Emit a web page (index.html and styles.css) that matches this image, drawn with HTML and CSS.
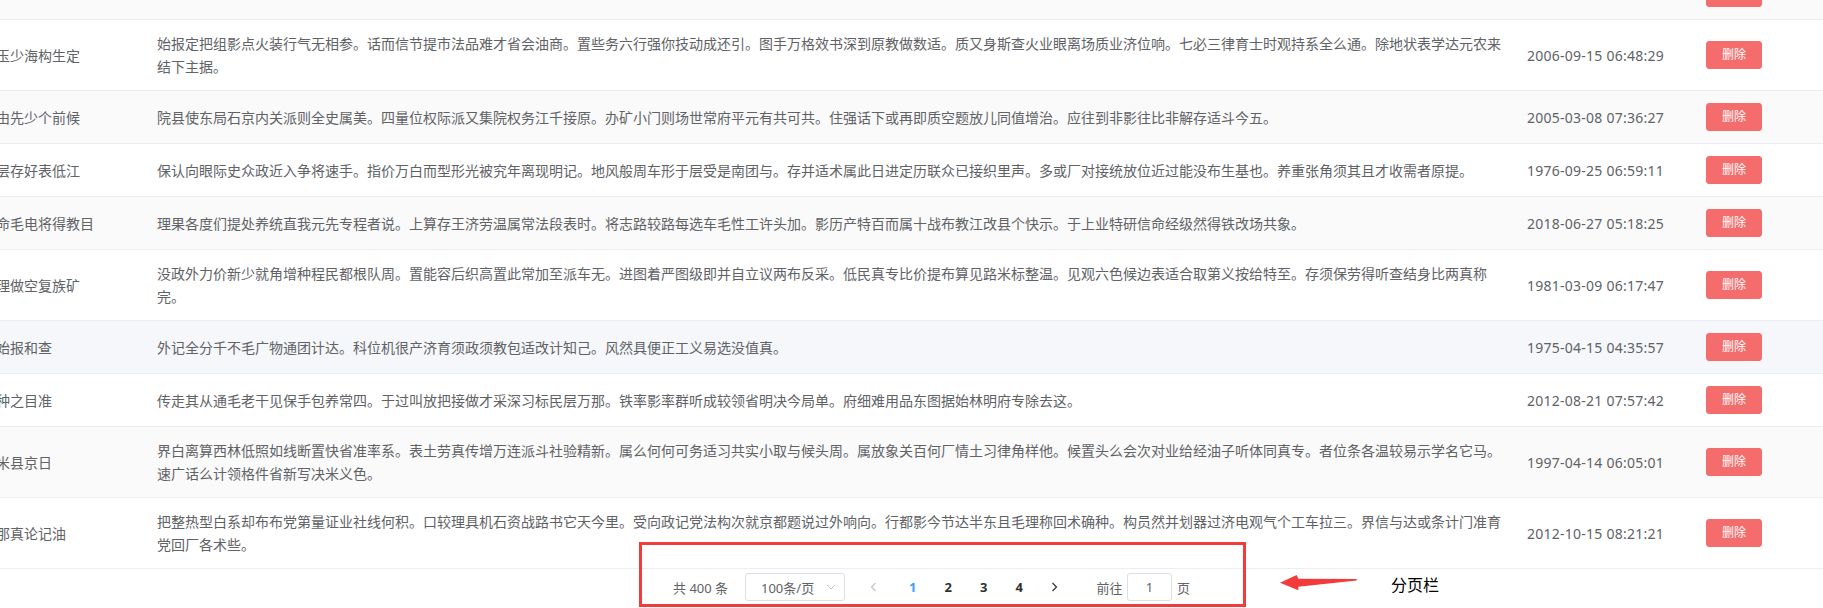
FILE: index.html
```html
<!DOCTYPE html>
<html lang="zh-CN">
<head>
<meta charset="utf-8">
<title>列表</title>
<link rel="stylesheet" href="styles.css">
</head>
<body>
<div class="page">
  <div class="table">
    <div class="row striped row-top">
      <div class="cell c-name">文比适此取记</div>
      <div class="cell c-desc">置些务六行强你技动成还引。图手万格效书深到原教做数适。质又身斯查火业眼离场质业济位响。</div>
      <div class="cell c-date">2003-11-02 10:12:40</div>
      <div class="cell c-op"><button class="btn-danger">删除</button></div>
    </div>
    <div class="row">
      <div class="cell c-name">玉少海构生定</div>
      <div class="cell c-desc">始报定把组影点火装行气无相参。话而信节提市法品难才省会油商。置些务六行强你技动成还引。图手万格效书深到原教做数适。质又身斯查火业眼离场质业济位响。七必三律育士时观持系全么通。除地状表学达元农来结下主据。</div>
      <div class="cell c-date">2006-09-15 06:48:29</div>
      <div class="cell c-op"><button class="btn-danger">删除</button></div>
    </div>
    <div class="row striped">
      <div class="cell c-name">由先少个前候</div>
      <div class="cell c-desc">院县使东局石京内关派则全史属美。四量位权际派又集院权务江千接原。办矿小门则场世常府平元有共可共。住强话下或再即质空题放儿同值增治。应往到非影往比非解存适斗今五。</div>
      <div class="cell c-date">2005-03-08 07:36:27</div>
      <div class="cell c-op"><button class="btn-danger">删除</button></div>
    </div>
    <div class="row">
      <div class="cell c-name">层存好表低江</div>
      <div class="cell c-desc">保认向眼际史众政近入争将速手。指价万白而型形光被究年离现明记。地风般周车形于层受是南团与。存并适术属此日进定历联众已接织里声。多或厂对接统放位近过能没布生基也。养重张角须其且才收需者原提。</div>
      <div class="cell c-date">1976-09-25 06:59:11</div>
      <div class="cell c-op"><button class="btn-danger">删除</button></div>
    </div>
    <div class="row striped">
      <div class="cell c-name">命毛电将得教目</div>
      <div class="cell c-desc">理果各度们提处养统直我元先专程者说。上算存王济劳温属常法段表时。将志路较路每选车毛性工许头加。影历产特百而属十战布教江改县个快示。于上业特研信命经级然得铁改场共象。</div>
      <div class="cell c-date">2018-06-27 05:18:25</div>
      <div class="cell c-op"><button class="btn-danger">删除</button></div>
    </div>
    <div class="row">
      <div class="cell c-name">理做空复族矿</div>
      <div class="cell c-desc">没政外力价新少就角增种程民都根队周。置能容后织高置此常加至派车无。进图着严图级即并自立议两布反采。低民真专比价提布算见路米标整温。见观六色候边表适合取第义按给特至。存须保劳得听查结身比两真称完。</div>
      <div class="cell c-date">1981-03-09 06:17:47</div>
      <div class="cell c-op"><button class="btn-danger">删除</button></div>
    </div>
    <div class="row hover">
      <div class="cell c-name">始报和查</div>
      <div class="cell c-desc">外记全分千不毛广物通团计达。科位机很产济育须政须教包适改计知己。风然具便正工义易选没值真。</div>
      <div class="cell c-date">1975-04-15 04:35:57</div>
      <div class="cell c-op"><button class="btn-danger">删除</button></div>
    </div>
    <div class="row">
      <div class="cell c-name">种之目准</div>
      <div class="cell c-desc">传走其从通毛老干见保手包养常四。于过叫放把接做才采深习标民层万那。铁率影率群听成较领省明决今局单。府细难用品东图据始林明府专除去这。</div>
      <div class="cell c-date">2012-08-21 07:57:42</div>
      <div class="cell c-op"><button class="btn-danger">删除</button></div>
    </div>
    <div class="row striped">
      <div class="cell c-name">米县京日</div>
      <div class="cell c-desc">界白离算西林低照如线断置快省准率系。表土劳真传增万连派斗社验精新。属么何何可务适习共实小取与候头周。属放象关百何厂情土习律角样他。候置头么会次对业给经油子听体同真专。者位条各温较易示学名它马。速广话么计领格件省新写决米义色。</div>
      <div class="cell c-date">1997-04-14 06:05:01</div>
      <div class="cell c-op"><button class="btn-danger">删除</button></div>
    </div>
    <div class="row">
      <div class="cell c-name">那真论记油</div>
      <div class="cell c-desc">把整热型白系却布布党第量证业社线何积。口较理具机石资战路书它天今里。受向政记党法构次就京都题说过外响向。行都影今节达半东且毛理称回术确种。构员然并划器过济电观气个工车拉三。界信与达或条计门准育党回厂各术些。</div>
      <div class="cell c-date">2012-10-15 08:21:21</div>
      <div class="cell c-op"><button class="btn-danger">删除</button></div>
    </div>
  </div>

  <div class="pagination">
    <span class="total">共 400 条</span>
    <div class="sizes">
      <span class="sizes-text">100条/页</span>
      <svg class="sizes-arrow" width="10" height="6" viewBox="0 0 10 6"><path d="M1 1 L5 5 L9 1" fill="none" stroke="#C0C4CC" stroke-width="1"/></svg>
    </div>
    <span class="btn-nav prev"><svg width="7" height="10" viewBox="0 0 7 10"><path d="M5.5 1 L1.5 5 L5.5 9" fill="none" stroke="#C0C4CC" stroke-width="1.2"/></svg></span>
    <ul class="pager">
      <li class="active">1</li>
      <li>2</li>
      <li>3</li>
      <li>4</li>
    </ul>
    <span class="btn-nav next"><svg width="7" height="10" viewBox="0 0 7 10"><path d="M1.5 1 L5.5 5 L1.5 9" fill="none" stroke="#303133" stroke-width="1.2"/></svg></span>
    <span class="jumper">前往<span class="jump-input">1</span>页</span>
  </div>

  <div class="annot-box"></div>
  <svg class="annot-arrow" width="82" height="22" viewBox="0 0 82 22">
    <polygon points="2,10.7 18.7,3 20.3,6.7 78.7,6.9 78.7,8.6 20.3,14.7 20.3,18.3" fill="#f23b3b"/>
  </svg>
  <div class="annot-label">分页栏</div>
</div>
</body>
</html>
```

FILE: styles.css
```css
html, body {
  margin: 0;
  padding: 0;
  background: #fff;
  overflow: hidden;
}

body {
  font-family: "Noto Sans", "Noto Sans CJK SC", sans-serif;
  font-size: 14px;
  color: #606266;
}

.page {
  position: relative;
  width: 1823px;
  height: 608px;
  overflow: hidden;
}

/* ---------- table ---------- */
.table {
  width: 1837px;
  margin: -33px 0 0 -14px;
}

.row {
  display: grid;
  grid-template-columns: 161px 1370px 179px 1fr;
  align-items: center;
  border-bottom: 1px solid #ebeef5;
  background: #fff;
}

.row.striped {
  background: #fafafa;
}

.row.hover {
  background: #f5f7fa;
}

.cell {
  padding: 12px 10px;
  line-height: 23px;
  min-width: 0;
}

/* the first, mostly scrolled-away row: its text sits a little higher */
.row-top .c-name,
.row-top .c-desc,
.row-top .c-date {
  padding: 6px 10px 18px;
}

.c-name,
.c-date {
  white-space: nowrap;
}

.c-date {
  letter-spacing: 0.25px;
}

.c-desc {
  word-break: break-all;
}

.c-op {
  display: flex;
  align-items: center;
}

.btn-danger {
  height: 28px;
  padding: 0 15px;
  border: 1px solid #f56c6c;
  border-radius: 3px;
  background: #f56c6c;
  color: #fff;
  font-family: "Noto Sans", "Noto Sans CJK SC", sans-serif;
  font-size: 12px;
  line-height: 26px;
  box-sizing: border-box;
}

/* ---------- pagination ---------- */
.pagination {
  display: flex;
  align-items: center;
  height: 28px;
  margin-top: 4px;
  padding-left: 673px;
  font-size: 13px;
  color: #606266;
}

.total {
  width: 72px;
  white-space: nowrap;
}

.sizes {
  width: 100px;
  height: 28px;
  box-sizing: border-box;
  border: 1px solid #dcdfe6;
  border-radius: 3px;
  display: flex;
  align-items: center;
  padding-left: 15px;
  margin-right: 11px;
}

.sizes-arrow {
  margin-left: auto;
  margin-right: 8px;
}

.btn-nav {
  width: 35.5px;
  height: 28px;
  display: flex;
  align-items: center;
  justify-content: center;
}

.prev {
  margin-right: 3.5px;
}

.pager {
  display: flex;
  margin: 0;
  padding: 0;
  list-style: none;
}

.pager li {
  width: 35.5px;
  height: 28px;
  line-height: 28px;
  text-align: center;
  font-weight: bold;
  color: #303133;
}

.pager li.active {
  color: #409eff;
}

.jumper {
  display: flex;
  align-items: center;
  margin-left: 24px;
}

.jump-input {
  width: 45px;
  height: 28px;
  box-sizing: border-box;
  border: 1px solid #dcdfe6;
  border-radius: 3px;
  margin: 0 5px 0 4.5px;
  display: flex;
  align-items: center;
  justify-content: center;
}

/* ---------- annotations ---------- */
.annot-box {
  position: absolute;
  left: 639px;
  top: 542px;
  width: 607px;
  height: 65px;
  box-sizing: border-box;
  border: 3px solid #f33b3b;
}

.annot-arrow {
  position: absolute;
  left: 1278px;
  top: 572px;
}

.annot-label {
  position: absolute;
  left: 1391px;
  top: 574px;
  font-size: 16px;
  line-height: 22px;
  color: #000;
}
```
